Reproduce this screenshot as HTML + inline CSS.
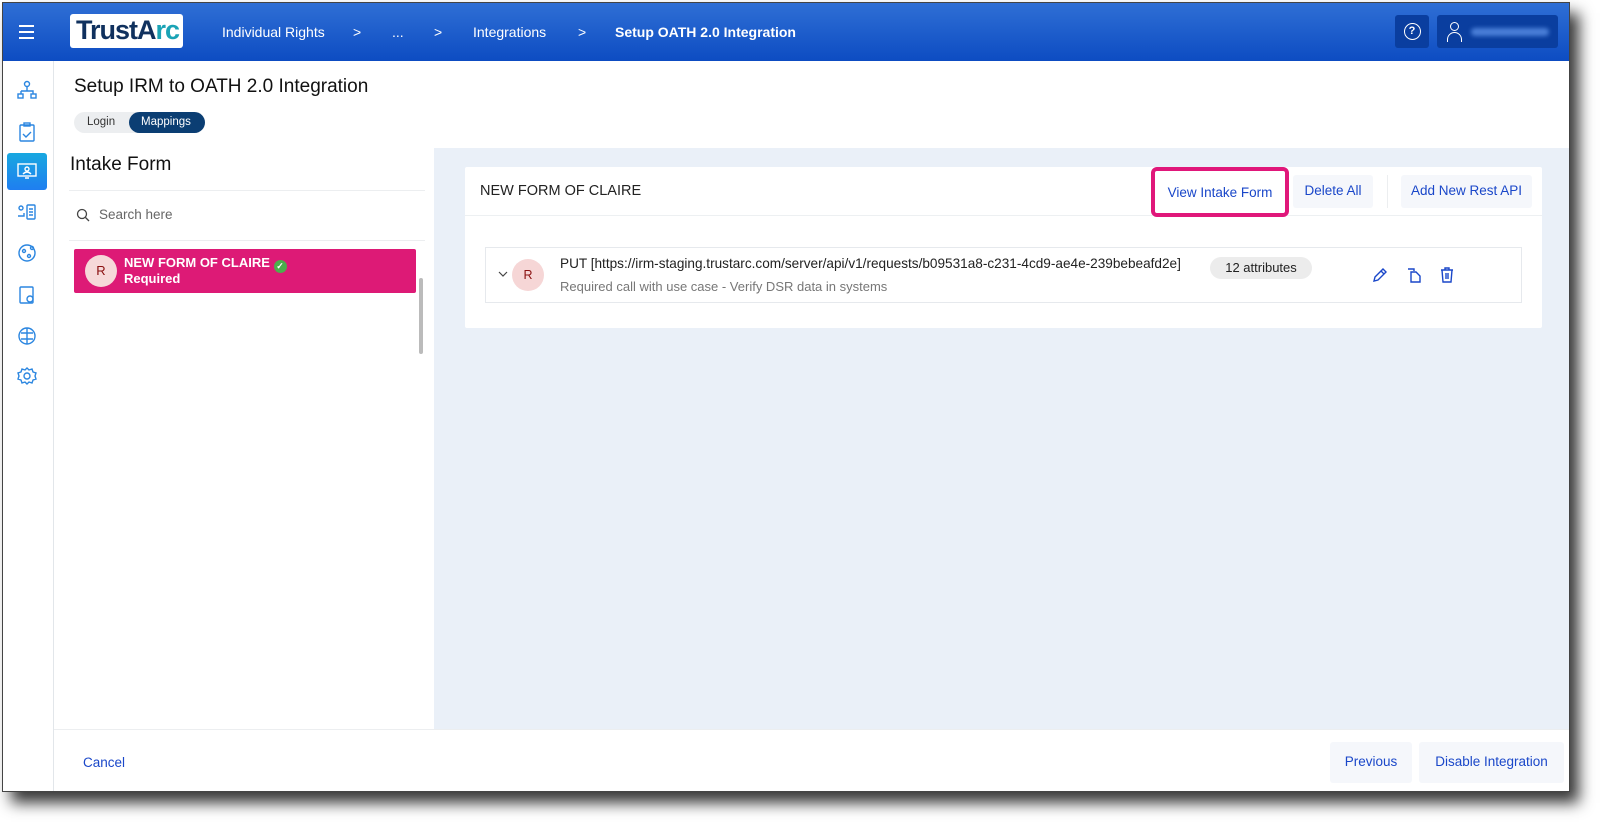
<!DOCTYPE html>
<html><head><meta charset="utf-8"><style>
*{box-sizing:border-box;margin:0;padding:0}
body{width:1600px;height:822px;background:#fff;font-family:"Liberation Sans",sans-serif;position:relative;overflow:hidden}
.win{position:absolute;left:2px;top:2px;width:1568px;height:790px;background:#fff;border:1px solid #444;box-shadow:9px 11px 14px rgba(0,0,0,.78);overflow:hidden}
.a{position:absolute}
.hdr{position:absolute;left:0;top:0;right:0;height:58px;background:linear-gradient(180deg,#2f6fd5,#0d4cc2);color:#fff}
.hdr .t{position:absolute;top:21px;font-size:14px}
.logo{position:absolute;left:67px;top:11px;width:113px;height:34px;background:#fff;border-radius:3px;font-size:27px;font-weight:bold;color:#10315e;padding:1px 0 0 6px;letter-spacing:-1px}
.side{position:absolute;left:0;top:58px;width:51px;bottom:0;background:#fff;border-right:1px solid #e2e6ea}
.ic{position:absolute;left:13px;width:22px;height:22px}
.blue{color:#1a47c9}
.btn{position:absolute;background:#f5f7fb;border-radius:3px;font-size:13.5px;text-align:center;color:#1a47c9}
</style></head><body>
<div class="win">
 <div class="hdr">
  <div style="position:absolute;left:16px;top:22px;width:15px">
   <div style="height:2px;background:#fff;margin-bottom:4px"></div><div style="height:2px;background:#fff;margin-bottom:4px"></div><div style="height:2px;background:#fff"></div></div>
  <div class="logo">TrustA<span style="color:#1aa3b5">rc</span></div>
  <div class="t" style="left:219px">Individual Rights</div>
  <div class="t" style="left:350px">&gt;</div>
  <div class="t" style="left:389px">...</div>
  <div class="t" style="left:431px">&gt;</div>
  <div class="t" style="left:470px">Integrations</div>
  <div class="t" style="left:575px">&gt;</div>
  <div class="t" style="left:612px;font-weight:bold">Setup OATH 2.0 Integration</div>
  <div style="position:absolute;left:1392px;top:12px;width:34px;height:33px;background:#0a3e9f;border-radius:3px"><div style="margin:8px auto;width:17px;height:17px;border:1.5px solid #fff;border-radius:50%;font-size:11px;text-align:center;line-height:14px;font-weight:bold">?</div></div>
  <div style="position:absolute;left:1434px;top:12px;width:121px;height:33px;background:#0a3e9f;border-radius:3px">
   <div style="position:absolute;left:13px;top:7px;width:9px;height:9px;border:1.5px solid #fff;border-radius:50%"></div>
   <div style="position:absolute;left:10px;top:17px;width:15px;height:10px;border:1.5px solid #fff;border-bottom:none;border-radius:8px 8px 0 0"></div>
   <div style="position:absolute;left:34px;top:13px;width:78px;height:8px;background:#4a7fd8;border-radius:4px;filter:blur(2px)"></div></div>
 </div>
 <div class="side">
  <svg class="ic" style="top:18px" viewBox="0 0 22 22" fill="none" stroke="#2b86e0" stroke-width="1.4"><circle cx="11" cy="5" r="2.5"/><path d="M11 8v4M5 12h12v3M5 12v3"/><rect x="2" y="15" width="5" height="4"/><rect x="15" y="15" width="5" height="4"/></svg>
  <svg class="ic" style="top:60px" viewBox="0 0 22 22" fill="none" stroke="#2b86e0" stroke-width="1.4"><rect x="4" y="4" width="14" height="16" rx="1"/><rect x="8" y="2" width="6" height="3"/><path d="M7 13l3 3 5-5"/></svg>
  <div style="position:absolute;left:4px;top:92px;width:40px;height:37px;border-radius:3px;background:linear-gradient(#18a8e0,#1f7ef0)"><svg style="position:absolute;left:9px;top:8px" width="22" height="20" viewBox="0 0 22 20" fill="none" stroke="#fff" stroke-width="1.4"><rect x="2" y="3" width="18" height="12"/><circle cx="11" cy="8" r="2"/><path d="M7 13q4-4 8 0M9 17h4"/></svg></div>
  <svg class="ic" style="top:140px" viewBox="0 0 22 22" fill="none" stroke="#2b86e0" stroke-width="1.4"><circle cx="5" cy="7" r="2"/><path d="M2 15h6v-3"/><rect x="11" y="4" width="8" height="14" rx="1"/><path d="M13 8h4M13 11h4M13 14h4"/></svg>
  <svg class="ic" style="top:181px" viewBox="0 0 22 22" fill="none" stroke="#2b86e0" stroke-width="1.4"><circle cx="11" cy="11" r="8"/><circle cx="8" cy="9" r="1.5"/><circle cx="13" cy="14" r="1.5"/><circle cx="16" cy="6" r="1.5"/></svg>
  <svg class="ic" style="top:223px" viewBox="0 0 22 22" fill="none" stroke="#2b86e0" stroke-width="1.4"><rect x="4" y="3" width="13" height="16" rx="1"/><circle cx="14" cy="15" r="3"/></svg>
  <svg class="ic" style="top:264px" viewBox="0 0 22 22" fill="none" stroke="#2b86e0" stroke-width="1.4"><circle cx="11" cy="11" r="8"/><path d="M11 3v16M5 8h12M5 14h12"/></svg>
  <svg class="ic" style="top:304px" viewBox="0 0 22 22" fill="none" stroke="#2b86e0" stroke-width="1.4"><circle cx="11" cy="11" r="3"/><path d="M11 3l2 2 3-1 1 3 3 1-1 3 1 3-3 1-1 3-3-1-2 2-2-2-3 1-1-3-3-1 1-3-1-3 3-1 1-3 3 1z"/></svg>
 </div>

 <div class="a" style="left:71px;top:73px;font-size:19px;color:#111">Setup IRM to OATH 2.0 Integration</div>
 <div class="a" style="left:71px;top:109px;width:131px;height:21px;background:#eceef0;border-radius:11px;font-size:11.5px">
  <span style="position:absolute;left:13px;top:4px;color:#333">Login</span>
  <div style="position:absolute;left:55px;top:0;width:76px;height:21px;background:#0b3e73;border-radius:11px;color:#fff;padding:4px 0 0 12px">Mappings</div></div>

 <div class="a" style="left:51px;top:145px;width:380px;height:581px;background:#fff">
  <div class="a" style="left:16px;top:6px;font-size:19px;color:#111">Intake Form</div>
  <div class="a" style="left:15px;right:9px;top:42px;border-top:1px solid #eceef0"></div>
  <svg class="a" style="left:22px;top:60px" width="14" height="14" viewBox="0 0 14 14" fill="none" stroke="#444" stroke-width="1.3"><circle cx="6" cy="6" r="4.5"/><path d="M9.5 9.5l3.5 3.5"/></svg>
  <div class="a" style="left:45px;top:59px;font-size:13.5px;color:#666">Search here</div>
  <div class="a" style="left:15px;right:9px;top:92px;border-top:1px solid #eceef0"></div>
  <div class="a" style="left:20px;top:101px;width:342px;height:44px;background:#dd1a76;border-radius:2px;color:#fff;font-size:13px;font-weight:bold">
   <div style="position:absolute;left:11px;top:6px;width:32px;height:32px;border-radius:50%;background:#f6d9d9;color:#8a1010;font-weight:normal;text-align:center;line-height:32px">R</div>
   <div style="position:absolute;left:50px;top:6px">NEW FORM OF CLAIRE <span style="display:inline-block;width:13px;height:13px;border-radius:50%;background:#4cae4c;vertical-align:-2px;color:#fff;font-size:9px;text-align:center;line-height:13px">✓</span></div>
   <div style="position:absolute;left:50px;top:22px">Required</div></div>
  <div class="a" style="left:365px;top:130px;width:4px;height:76px;background:#bbb;border-radius:2px"></div>
 </div>

 <div class="a" style="left:431px;top:145px;right:0;height:581px;background:#eaf0f8"></div>
 <div class="a" style="left:462px;top:164px;width:1077px;height:161px;background:#fff;border-radius:2px">
  <div class="a" style="left:15px;top:16px;font-size:14.5px;color:#222">NEW FORM OF CLAIRE</div>
  <div class="a" style="left:0;right:0;top:48px;border-top:1px solid #edf0f2"></div>
  <div class="a blue" style="left:686px;top:0;width:138px;height:50px;border:4px solid #e0177a;border-radius:6px;font-size:13.5px;text-align:center;padding-top:14px">View Intake Form</div>
  <div class="btn" style="left:828px;top:8px;width:80px;height:33px;padding-top:8px">Delete All</div>
  <div class="a" style="left:922px;top:8px;border-left:1px solid #eceef0;height:33px"></div>
  <div class="btn" style="left:936px;top:8px;width:131px;height:33px;padding-top:8px">Add New Rest API</div>
  <div class="a" style="left:20px;top:80px;width:1037px;height:56px;border:1px solid #e6e9ed">
   <svg class="a" style="left:12px;top:22px" width="10" height="8" viewBox="0 0 10 8" fill="none" stroke="#444" stroke-width="1.2"><path d="M1 2l4 4 4-4"/></svg>
   <div class="a" style="left:26px;top:11px;width:32px;height:32px;border-radius:50%;background:#f6d6d6;color:#8a1010;font-size:12.5px;text-align:center;line-height:32px">R</div>
   <div class="a" style="left:74px;top:8px;font-size:13.6px;color:#222;white-space:nowrap">PUT [https://irm-staging.trustarc.com/server/api/v1/requests/b09531a8-c231-4cd9-ae4e-239bebeafd2e]</div>
   <div class="a" style="left:724px;top:9px;width:102px;height:22px;background:#ececec;border-radius:11px;font-size:13px;color:#222;text-align:center;padding-top:3px">12 attributes</div>
   <div class="a" style="left:74px;top:31px;font-size:13px;color:#777">Required call with use case - Verify DSR data in systems</div>
   <svg class="a" style="left:886px;top:19px" width="16" height="16" viewBox="0 0 16 16" fill="none" stroke="#1a47c9" stroke-width="1.4"><path d="M2 14l1-4 8-8 3 3-8 8z M9 4l3 3"/></svg>
   <svg class="a" style="left:920px;top:19px" width="16" height="16" viewBox="0 0 16 16" fill="none" stroke="#1a47c9" stroke-width="1.4"><path d="M2 2h6v2M5 5h5l4 4v6H5z"/></svg>
   <svg class="a" style="left:953px;top:19px" width="16" height="16" viewBox="0 0 16 16" fill="none" stroke="#1a47c9" stroke-width="1.4"><path d="M2 3h12M6 3V1h4v2M3 3l1 12h8l1-12M7 6v6M9 6v6"/></svg>
  </div>
 </div>

 <div class="a" style="left:51px;right:0;top:726px;border-top:1px solid #eceef0"></div>
 <div class="a blue" style="left:80px;top:752px;font-size:13.5px">Cancel</div>
 <div class="btn" style="left:1327px;top:739px;width:82px;height:41px;padding-top:12px">Previous</div>
 <div class="btn" style="left:1416px;top:739px;width:145px;height:41px;padding-top:12px">Disable Integration</div>
</div>
</body></html>
